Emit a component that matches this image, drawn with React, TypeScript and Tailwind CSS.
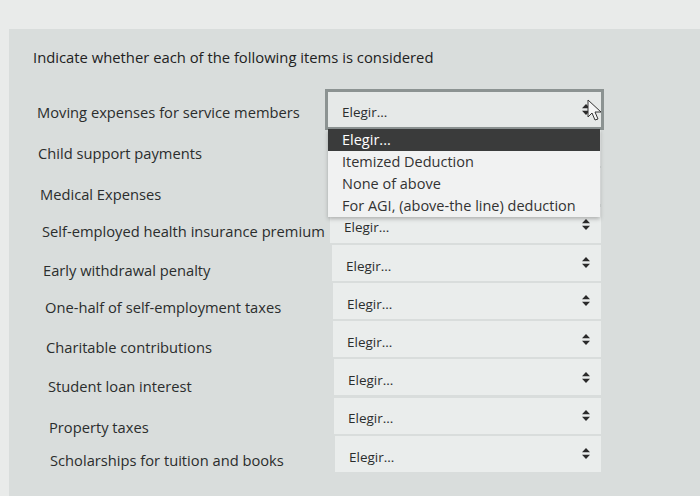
import React from 'react';

// indent / pt / shift values follow the slight skew of the original screen
const items = [
  { label: 'Moving expenses for service members', indent: 'pl-[4px]', pt: 'pt-[10px]', shift: 'ml-0' },
  { label: 'Child support payments', indent: 'pl-[5px]', pt: 'pt-[13px]', shift: 'ml-[1px]' },
  { label: 'Medical Expenses', indent: 'pl-[7px]', pt: 'pt-[16px]', shift: 'ml-[2px]' },
  { label: 'Self-employed health insurance premium', indent: 'pl-[9px]', pt: 'pt-[14px]', shift: 'ml-[2px]' },
  { label: 'Early withdrawal penalty', indent: 'pl-[10px]', pt: 'pt-[15px]', shift: 'ml-[4px]' },
  { label: 'One-half of self-employment taxes', indent: 'pl-[12px]', pt: 'pt-[14px]', shift: 'ml-[5px]' },
  { label: 'Charitable contributions', indent: 'pl-[13px]', pt: 'pt-[16px]', shift: 'ml-[5px]' },
  { label: 'Student loan interest', indent: 'pl-[15px]', pt: 'pt-[17px]', shift: 'ml-[6px]' },
  { label: 'Property taxes', indent: 'pl-[16px]', pt: 'pt-[19px]', shift: 'ml-[6px]' },
  { label: 'Scholarships for tuition and books', indent: 'pl-[17px]', pt: 'pt-[14px]', shift: 'ml-[7px]' },
];

const options = ['Elegir...', 'Itemized Deduction', 'None of above', 'For AGI, (above-the line) deduction'];

const Arrows: React.FC = () => (
  <svg width="8" height="11" viewBox="0 0 8 11" className="shrink-0 -mt-[6px]">
    <path d="M4 0 L8 4.2 L0 4.2 Z" fill="#2a2a2a" />
    <path d="M4 11 L8 6.8 L0 6.8 Z" fill="#2a2a2a" />
  </svg>
);

const Cursor: React.FC = () => (
  <svg width="16" height="24" viewBox="0 0 16 24" className="absolute left-[587px] top-[99px]">
    <path
      d="M1 1 L1 18 L5 14 L8 21 L11 20 L8 13 L14 13 Z"
      fill="#f4f5f5"
      stroke="#333"
      strokeWidth="1"
      strokeLinejoin="round"
    />
  </svg>
);

const App: React.FC = () => {
  return (
    <div
      className="relative w-[700px] h-[496px] overflow-hidden bg-[#e9ebea] pt-[29px] pl-[9px] text-[#2b2d2d]"
      style={{ fontFamily: '"Open Sans", "Noto Sans", sans-serif' }}
    >
      <div className="h-[467px] bg-[#d9dddc] pl-[24px] pt-[17px]">
        <h1 className="text-[14.8px] leading-[22px] text-[#222]">
          Indicate whether each of the following items is considered
        </h1>

        <div className="mt-[24px] w-[568px]">
          {items.map((item, i) => {
            // rows 2 and 3 lie under the open list
            const hidden = i === 1 || i === 2;
            return (
              <div key={item.label} className="flex h-[38.2px] items-start">
                <div
                  className={`w-[295px] shrink-0 whitespace-nowrap text-[14.7px] leading-[20px] text-[#2b2d2d] ${item.indent} ${item.pt}`}
                >
                  {item.label}
                </div>
                <div
                  className={`flex flex-1 items-center justify-between pl-[14px] pr-[11px] pt-[6px] text-[13.5px] ${item.shift} ${
                    i === 0
                      ? 'h-[35px] bg-[#e6e9e8] outline-[3px] outline-solid outline-[#8c9392]'
                      : 'h-[36px] bg-[#eaedec]'
                  }`}
                >
                  {!hidden && (
                    <>
                      <span>Elegir...</span>
                      <Arrows />
                    </>
                  )}
                </div>
              </div>
            );
          })}
        </div>
      </div>

      {/* open dropdown list of the first select */}
      <div className="absolute left-[328px] top-[129px] w-[272px] bg-[#f1f2f2] shadow-[0_2px_4px_rgba(0,0,0,0.25)] text-[14.5px] leading-[22px] text-[#333]">
        {options.map((opt, i) => (
          <div
            key={opt}
            className={`h-[22px] pl-[14px] ${i === 0 ? 'bg-[#3a3b3b] text-white' : ''}`}
          >
            {opt}
          </div>
        ))}
      </div>

      <Cursor />
    </div>
  );
};

export default App;
